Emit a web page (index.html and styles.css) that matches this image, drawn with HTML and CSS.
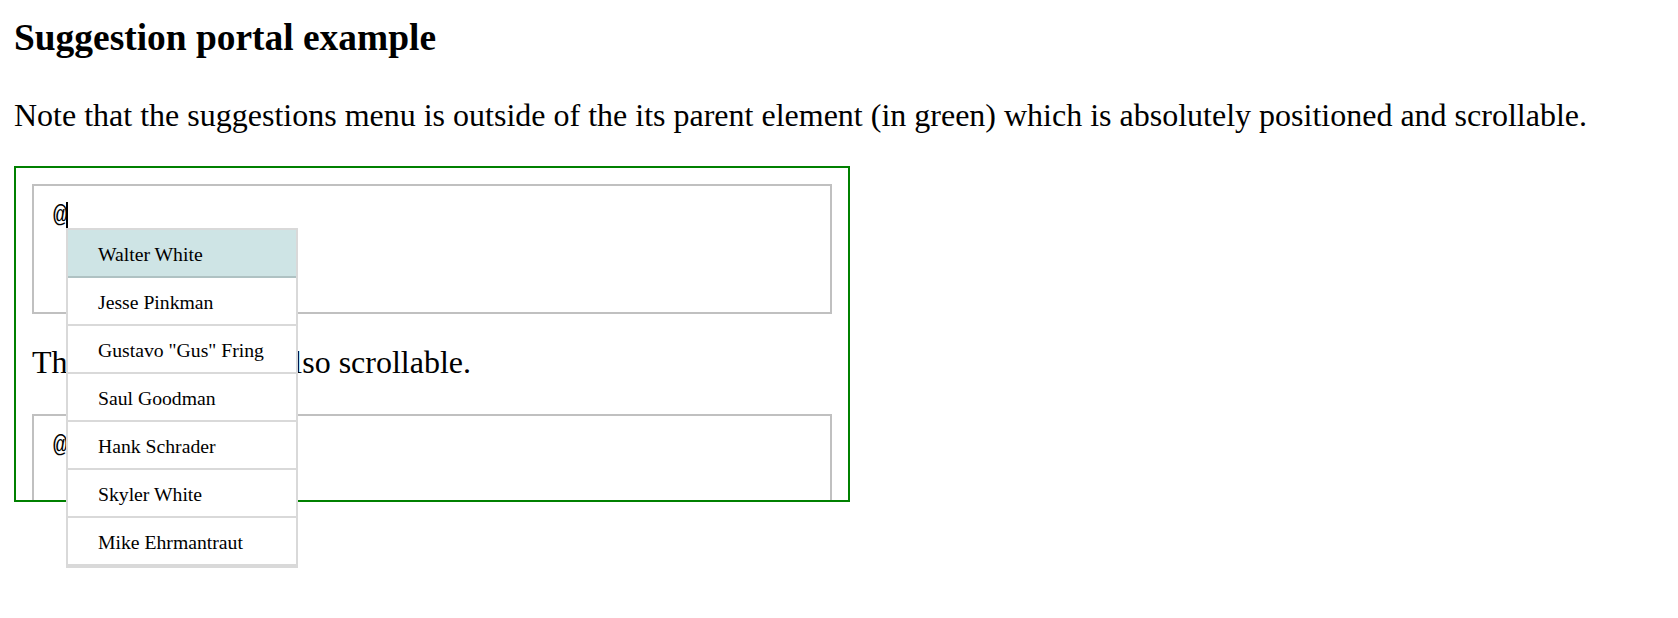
FILE: index.html
```html
<!DOCTYPE html>
<html lang="en">
<head>
<meta charset="utf-8">
<title>Suggestion portal example</title>
<link rel="stylesheet" href="styles.css">
</head>
<body>
<div class="page">
  <h3 class="title">Suggestion portal example</h3>
  <p class="note">Note that the suggestions menu is outside of the its parent element (in green) which is absolutely positioned and scrollable.</p>
  <div class="scroller">
    <div class="mentions"><span class="at">@</span><span class="caret"></span></div>
    <p class="inner-note">The input below is also scrollable.</p>
    <div class="mentions"><span class="at">@</span></div>
  </div>
</div>
<ul class="suggestions">
  <li class="item focused">Walter White</li>
  <li class="item">Jesse Pinkman</li>
  <li class="item">Gustavo "Gus" Fring</li>
  <li class="item">Saul Goodman</li>
  <li class="item">Hank Schrader</li>
  <li class="item">Skyler White</li>
  <li class="item">Mike Ehrmantraut</li>
</ul>
</body>
</html>
```

FILE: styles.css
```css
html, body {
  margin: 0;
  background: #ffffff;
  color: #000000;
  font-family: "Liberation Serif", "Times New Roman", serif;
}

.page {
  padding: 16px 14px 0;
}

.title {
  margin: 0;
  font-size: 37.44px;
  line-height: 44px;
  font-weight: bold;
}

.note {
  margin: 37px 0 32px;
  font-size: 32px;
  line-height: 37px;
  white-space: nowrap;
}

.scroller {
  width: 800px;
  height: 300px;
  padding: 16px;
  border: 2px solid #008000;
  overflow: hidden;
}

.mentions {
  box-sizing: border-box;
  height: 130px;
  border: 2px solid #c0c0c0;
  padding: 17px 18px 15px 19px;
  font-family: "Liberation Mono", "Courier New", monospace;
  font-size: 24px;
  line-height: 26px;
  display: flex;
  align-items: flex-start;
}

.caret {
  display: block;
  width: 2px;
  height: 26px;
  margin: -1px 0 0 -1px;
  background: #000000;
}

.inner-note {
  margin: 30px 0 33px;
  font-size: 32px;
  line-height: 37px;
}

.suggestions {
  position: absolute;
  left: 66px;
  top: 228px;
  box-sizing: border-box;
  width: 232px;
  margin: 0;
  padding: 0;
  list-style: none;
  background: #ffffff;
  border: 2px solid rgba(0, 0, 0, 0.15);
  font-size: 19.7px;
}

.item {
  padding: 11px 30px 9px;
  line-height: 26px;
  border-bottom: 2px solid rgba(0, 0, 0, 0.15);
  white-space: nowrap;
}

.item.focused {
  background: #cee4e5;
}
```
